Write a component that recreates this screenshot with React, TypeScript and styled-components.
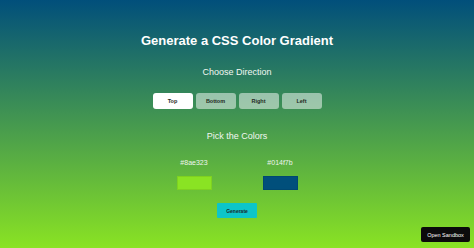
import React, { useState } from "react";
import styled, { createGlobalStyle } from "styled-components";

const Global = createGlobalStyle`
  html, body { margin: 0; padding: 0; }
  body { font-family: "Liberation Sans", Arial, sans-serif; }
`;

const Page = styled.div<{ $from: string; $to: string }>`
  position: relative;
  width: 474px;
  height: 248px;
  box-sizing: border-box;
  background: linear-gradient(to bottom, ${(p) => p.$to}, ${(p) => p.$from});
  display: flex;
  flex-direction: column;
  align-items: center;
  color: #ffffff;
  padding-top: 33px;
`;

const Title = styled.h1`
  margin: 0 0 17px;
  font-size: 13px;
  font-weight: 700;
  line-height: 16px;
`;

const Heading = styled.h2`
  margin: 0;
  font-size: 9px;
  font-weight: 400;
  line-height: 12px;
  color: #f2f7f2;
`;

const DirRow = styled.div`
  display: flex;
  gap: 3px;
  margin-top: 15px;
  margin-bottom: 21px;
`;

const DirButton = styled.button<{ $active: boolean }>`
  width: 40px;
  height: 16px;
  padding: 0;
  border: none;
  border-radius: 3px;
  font-family: inherit;
  font-size: 5.5px;
  font-weight: 700;
  color: #1f2a22;
  background: ${(p) => (p.$active ? "#ffffff" : "rgba(255,255,255,0.5)")};
  cursor: pointer;
`;

const ColorsRow = styled.div`
  display: flex;
  gap: 51px;
  margin-top: 16px;
`;

const ColorCol = styled.div`
  display: flex;
  flex-direction: column;
  align-items: center;
  width: 35px;
`;

const HexLabel = styled.span`
  font-size: 7px;
  line-height: 9px;
  color: #eef4ec;
  white-space: nowrap;
`;

const Swatch = styled.div<{ $c: string }>`
  margin-top: 9px;
  width: 35px;
  height: 14px;
  background: ${(p) => p.$c};
  box-shadow: inset 0 0 0 1px rgba(0,0,0,0.08);
`;

const GenButton = styled.button`
  margin-top: 13px;
  width: 40px;
  height: 15px;
  padding: 0;
  border: none;
  border-radius: 1px;
  background: #0dc5c9;
  color: #1b2b2e;
  font-family: inherit;
  font-size: 5px;
  font-weight: 700;
`;

const Sandbox = styled.div`
  position: absolute;
  right: 4px;
  bottom: 6px;
  width: 49px;
  height: 15px;
  border-radius: 2px;
  background: #0b0b0b;
  color: #ffffff;
  font-size: 5.5px;
  display: flex;
  align-items: center;
  justify-content: center;
`;

export default function App() {
  const [dir, setDir] = useState("Top");
  const from = "#8ae323";
  const to = "#014f7b";
  return (
    <>
      <Global />
      <Page $from={from} $to={to}>
        <Title>Generate a CSS Color Gradient</Title>
        <Heading>Choose Direction</Heading>
        <DirRow>
          {["Top", "Bottom", "Right", "Left"].map((d) => (
            <DirButton key={d} $active={dir === d} onClick={() => setDir(d)}>
              {d}
            </DirButton>
          ))}
        </DirRow>
        <Heading>Pick the Colors</Heading>
        <ColorsRow>
          <ColorCol>
            <HexLabel>{from}</HexLabel>
            <Swatch $c={from} />
          </ColorCol>
          <ColorCol>
            <HexLabel>{to}</HexLabel>
            <Swatch $c={to} />
          </ColorCol>
        </ColorsRow>
        <GenButton>Generate</GenButton>
        <Sandbox>Open Sandbox</Sandbox>
      </Page>
    </>
  );
}
